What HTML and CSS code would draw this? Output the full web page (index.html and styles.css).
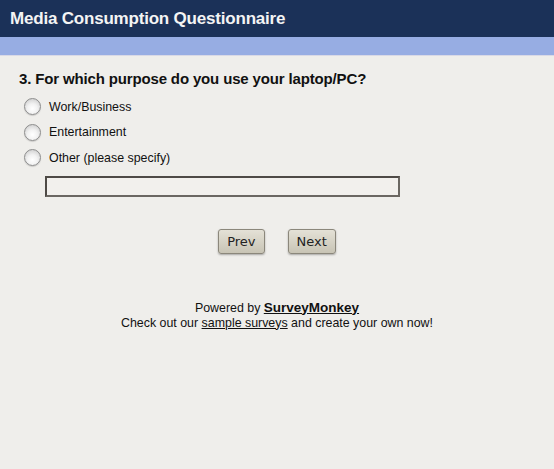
FILE: index.html
```html
<!DOCTYPE html>
<html>
<head>
<meta charset="utf-8">
<link rel="stylesheet" href="styles.css">
</head>
<body>
<header class="title-bar"><h1 class="title">Media Consumption Questionnaire</h1></header>
<div class="sub-bar"></div>
<main class="content">
  <h2 class="question">3. For which purpose do you use your laptop/PC?</h2>
  <ul class="options">
    <li class="option"><span class="radio"></span><span class="label">Work/Business</span></li>
    <li class="option"><span class="radio"></span><span class="label">Entertainment</span></li>
    <li class="option"><span class="radio"></span><span class="label">Other (please specify)</span></li>
  </ul>
  <div class="other-input"></div>
  <div class="nav">
    <button class="btn">Prev</button>
    <button class="btn">Next</button>
  </div>
  <footer class="footer">
    <div>Powered by <a class="brand" href="#">SurveyMonkey</a></div>
    <div>Check out our <a class="link" href="#">sample surveys</a> and create your own now!</div>
  </footer>
</main>
</body>
</html>
```
FILE: styles.css
```css
html, body {
  margin: 0;
  padding: 0;
  background: #efeeeb;
  font-family: "Liberation Sans", Arial, sans-serif;
  color: #111;
}
.title-bar {
  background: #1b3158;
  height: 37px;
  display: flex;
  align-items: center;
  padding-left: 10px;
}
.title {
  margin: 0;
  color: #f4f4f4;
  font-size: 17px;
  font-weight: bold;
  letter-spacing: -0.2px;
}
.sub-bar {
  background: #97ade3;
  height: 18px;
  border-bottom: 1px solid #d9d9e6;
}
.content {
  padding: 14px 0 0 19px;
}
.question {
  margin: 0;
  font-size: 15px;
  font-weight: bold;
  line-height: 18px;
  letter-spacing: -0.15px;
}
.options {
  list-style: none;
  margin: 6px 0 0 0;
  padding: 0;
}
.option {
  display: flex;
  align-items: center;
  height: 25.5px;
}
.radio {
  width: 15px;
  height: 15px;
  border-radius: 50%;
  margin-left: 5px;
  background: radial-gradient(circle at 50% 65%, #ffffff 0%, #f2f2f2 40%, #c4c4c4 100%);
  border: 1px solid #8d8d8d;
  box-shadow: 0 1px 1px rgba(0,0,0,0.15);
}
.label {
  margin-left: 8px;
  font-size: 12.4px;
}
.other-input {
  margin: 5px 0 0 26px;
  width: 351px;
  height: 17px;
  border: 2px solid #4e4a46;
  border-right-color: #6b6762;
  border-bottom-color: #6b6762;
  background: #f2f0ed;
}
.nav {
  display: flex;
  justify-content: center;
  gap: 23px;
  margin: 32px 0 0 -19px;
}
.btn {
  height: 25px;
  padding: 0 8px;
  font-family: "DejaVu Sans", sans-serif;
  font-size: 13px;
  color: #222;
  background: linear-gradient(#e4e1d6, #c8c4b5);
  border: 1px solid #8b877b;
  border-radius: 3px;
  box-shadow: 0 1px 2px rgba(0,0,0,0.3);
}
.footer {
  margin: 46px 0 0 -19px;
  text-align: center;
  font-size: 12.4px;
  line-height: 15px;
  color: #111;
}
.brand {
  color: #111;
  font-weight: bold;
  font-size: 13.5px;
  text-decoration: underline;
}
.link {
  color: #111;
  text-decoration: underline;
}
```
